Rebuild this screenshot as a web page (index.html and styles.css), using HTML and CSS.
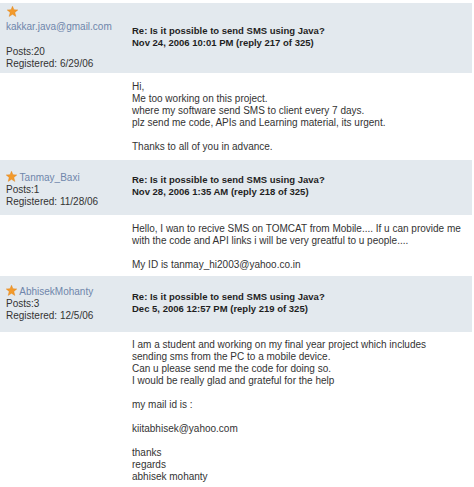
FILE: index.html
```html
<!DOCTYPE html>
<html>
<head>
<meta charset="utf-8">
<link rel="stylesheet" href="styles.css">
</head>
<body>
<div class="thread">
  <div class="post">
    <div class="head head-1">
      <div class="author">
        <div class="star-line"><svg class="star" viewBox="0 0 10 10"><polygon points="5,0.2 6.3,3.4 9.8,3.6 7.1,5.8 8,9.5 5,7.5 2,9.5 2.9,5.8 0.2,3.6 3.7,3.4"/></svg></div>
        <div class="name name-long">kakkar.java@gmail.com</div>
        <div class="stats">Posts:20</div>
        <div class="stats">Registered: 6/29/06</div>
      </div>
      <div class="title">
        <div>Re: Is it possible to send SMS using Java?</div>
        <div>Nov 24, 2006 10:01 PM (reply 217 of 325)</div>
      </div>
    </div>
    <div class="body body-1">
      <p>Hi,<br>Me too working on this project.<br>where my software send SMS to client every 7 days.<br>plz send me code, APIs and Learning material, its urgent.</p>
      <p>Thanks to all of you in advance.</p>
    </div>
  </div>

  <div class="post">
    <div class="head head-2">
      <div class="author">
        <div class="name"><svg class="star" viewBox="0 0 10 10"><polygon points="5,0.2 6.3,3.4 9.8,3.6 7.1,5.8 8,9.5 5,7.5 2,9.5 2.9,5.8 0.2,3.6 3.7,3.4"/></svg> Tanmay_Baxi</div>
        <div class="stats">Posts:1</div>
        <div class="stats">Registered: 11/28/06</div>
      </div>
      <div class="title">
        <div>Re: Is it possible to send SMS using Java?</div>
        <div>Nov 28, 2006 1:35 AM (reply 218 of 325)</div>
      </div>
    </div>
    <div class="body body-2">
      <p>Hello, I wan to recive SMS on TOMCAT from Mobile.... If u can provide me<br>with the code and API links i will be very greatful to u people....</p>
      <p>My ID is tanmay_hi2003@yahoo.co.in</p>
    </div>
  </div>

  <div class="post">
    <div class="head head-3">
      <div class="author">
        <div class="name"><svg class="star" viewBox="0 0 10 10"><polygon points="5,0.2 6.3,3.4 9.8,3.6 7.1,5.8 8,9.5 5,7.5 2,9.5 2.9,5.8 0.2,3.6 3.7,3.4"/></svg> AbhisekMohanty</div>
        <div class="stats">Posts:3</div>
        <div class="stats">Registered: 12/5/06</div>
      </div>
      <div class="title">
        <div>Re: Is it possible to send SMS using Java?</div>
        <div>Dec 5, 2006 12:57 PM (reply 219 of 325)</div>
      </div>
    </div>
    <div class="body body-3">
      <p>I am a student and working on my final year project which includes<br>sending sms from the PC to a mobile device.<br>Can u please send me the code for doing so.<br>I would be really glad and grateful for the help</p>
      <p>my mail id is :</p>
      <p>kiitabhisek@yahoo.com</p>
      <p>thanks<br>regards<br>abhisek mohanty</p>
    </div>
  </div>
</div>
</body>
</html>
```

FILE: styles.css
```css
html, body {
  margin: 0;
  padding: 0;
  background: #ffffff;
}
body {
  font-family: "Liberation Sans", Arial, sans-serif;
  font-size: 10px;
  line-height: 12px;
  color: #333333;
}
.thread {
  padding-top: 3px;
  width: 472px;
}
.head {
  display: flex;
  align-items: center;
  background: #e3e9ee;
}
.head-1 {
  height: 70px;
}
.head-2 {
  height: 55px;
}
.head-3 {
  height: 56px;
}
.author {
  width: 132px;
  flex-shrink: 0;
  padding-left: 6px;
  box-sizing: border-box;
  align-self: flex-start;
}
.head-1 .author { padding-top: 2px; }
.head-2 .author { padding-top: 11px; }
.head-3 .author { padding-top: 9px; }
.star-line {
  height: 15px;
  padding-left: 1px;
}
.star-line .star {
  display: block;
  margin-top: 1px;
}
.star {
  width: 11px;
  height: 11px;
  fill: #f39a2b;
  stroke: #e0861c;
  stroke-width: 0.4;
  vertical-align: -1px;
}
.name {
  color: #6f86ab;
}
.name-long {
  margin-bottom: 13px;
}
.stats {
  color: #333333;
}
.title {
  font-size: 9.5px;
  font-weight: bold;
  color: #1f1f1f;
  padding-bottom: 3px;
}
.body {
  padding-left: 132px;
}
.body p {
  margin: 0 0 12px 0;
}
.body p:last-child {
  margin-bottom: 0;
}
.body-1 { padding-top: 8px; padding-bottom: 7px; }
.body-2 { padding-top: 8px; padding-bottom: 5px; }
.body-3 { padding-top: 7px; padding-bottom: 4px; }
```
